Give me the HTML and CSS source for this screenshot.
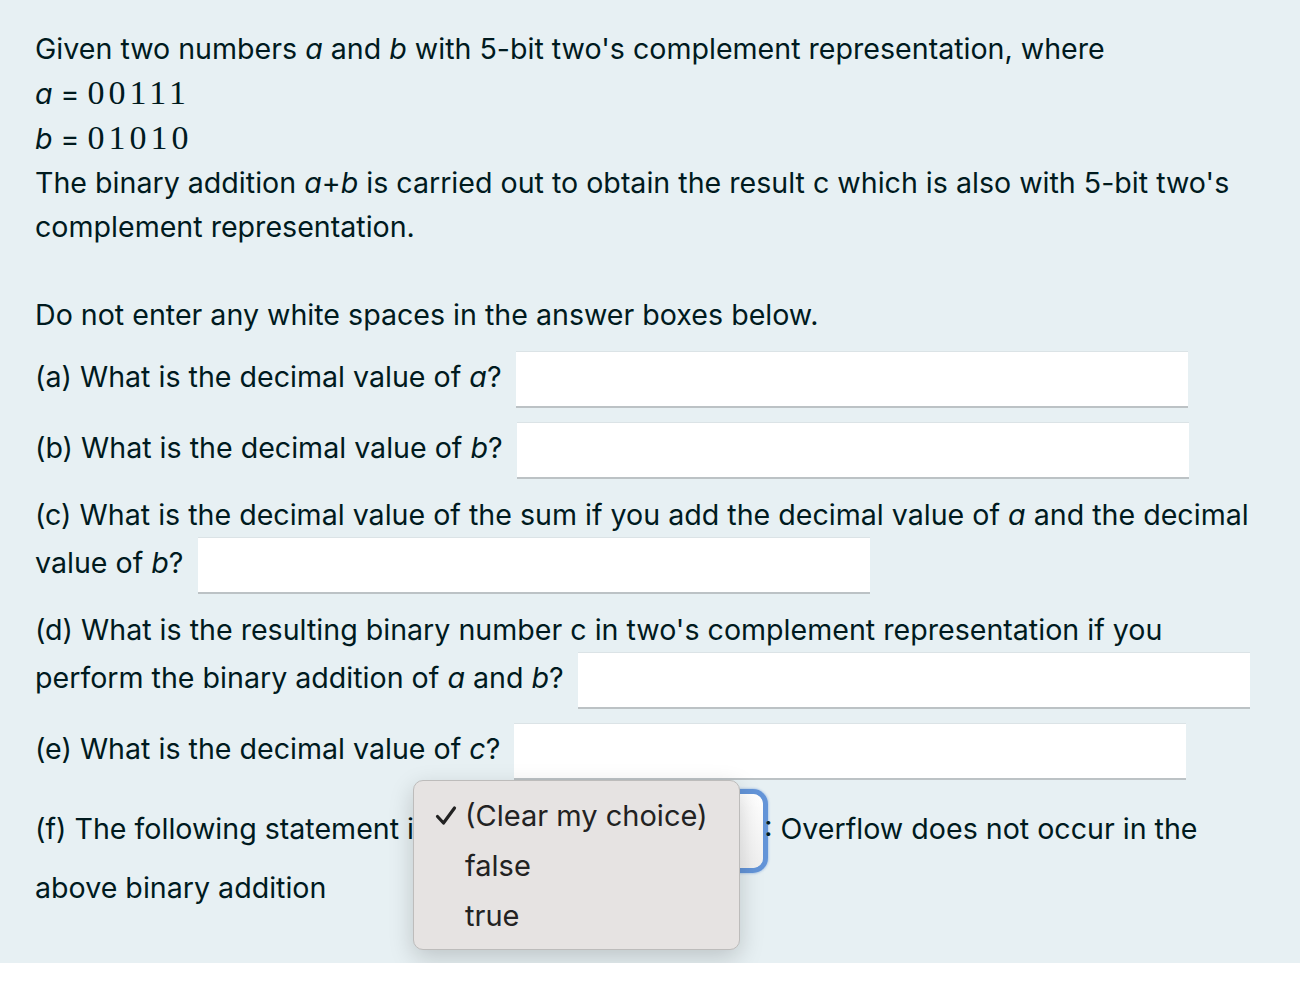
FILE: index.html
```html
<!DOCTYPE html>
<html>
<head>
<meta charset="utf-8">
<link rel="stylesheet" href="styles.css">
</head>
<body>
<div class="qtext">
  <p class="intro">Given two numbers <i>a</i> and <i>b</i> with 5-bit two's complement representation, where<br>
  <span class="math"><i>a</i> = <span class="mn">00111</span></span><br>
  <span class="math"><i>b</i> = <span class="mn">01010</span></span><br>
  The binary addition <i>a</i>+<i>b</i> is carried out to obtain the result c which is also with 5-bit two's complement representation.</p>
  <p class="blank">&nbsp;</p>
  <p class="line">Do not enter any white spaces in the answer boxes below.</p>
  <p class="q">(a) What is the decimal value of <i>a</i>? <span class="answer"></span></p>
  <p class="q">(b) What is the decimal value of <i>b</i>? <span class="answer"></span></p>
  <p class="q">(c) What is the decimal value of the sum if you add the decimal value of <i>a</i> and the decimal value of <i>b</i>? <span class="answer"></span></p>
  <p class="q">(d) What is the resulting binary number c in two's complement representation if you perform the binary addition of <i>a</i> and <i>b</i>? <span class="answer"></span></p>
  <p class="q">(e) What is the decimal value of <i>c</i>? <span class="answer"></span></p>
  <p class="q last">(f) The following statement is <span class="select"></span>: Overflow does not occur in the above binary addition</p>
  <div class="popup">
    <div class="opt"><svg class="check" width="22" height="22" viewBox="0 0 22 22"><path d="M2.5 11.5 L8.5 18 L19.5 3" fill="none" stroke="#222222" stroke-width="3.2" stroke-linecap="round" stroke-linejoin="round"/></svg>(Clear my choice)</div>
    <div class="opt">false</div>
    <div class="opt">true</div>
  </div>
</div>
</body>
</html>
```

FILE: styles.css
```css
html, body {
  margin: 0;
  padding: 0;
  background: #ffffff;
}
.qtext {
  position: relative;
  background: #e7f0f3;
  color: #001a1e;
  font-family: Inter, "Noto Sans", sans-serif;
  font-size: 28.6px;
  line-height: 44px;
  padding: 27px 32px 54px 35px;
  height: 882px;
}
.qtext p {
  margin: 0;
}
.qtext p.q {
  margin-top: 14px;
}
.qtext p.last {
  line-height: 40px;
}
.math i {
  font-style: italic;
}
.mn {
  font-family: "Liberation Serif", "Times New Roman", serif;
  font-size: 34px;
  letter-spacing: 4px;
}
.answer {
  display: inline-block;
  vertical-align: middle;
  width: 672px;
  height: 57px;
  box-sizing: border-box;
  background: #ffffff;
  border-top: 1px solid #dbe3e6;
  border-bottom: 2px solid #bcc2c5;
  margin-left: 6px;
}
.select {
  display: inline-block;
  vertical-align: middle;
  width: 326px;
  height: 74px;
  box-sizing: border-box;
  background: linear-gradient(#ffffff, #f0f0f0);
  border-radius: 10px;
  box-shadow: 0 0 0 5px #6394d8, 0 0 2px 6px rgba(99, 148, 216, 0.35);
  margin: 0 1px 0 0;
}
.popup {
  position: absolute;
  left: 413px;
  top: 780px;
  width: 327px;
  height: 170px;
  box-sizing: border-box;
  background: #e6e3e2;
  border: 1px solid #bdbcbb;
  border-radius: 10px;
  box-shadow: 0 8px 24px rgba(0, 0, 0, 0.18);
  padding-top: 10px;
  color: #222222;
  font-size: 29px;
}
.opt {
  height: 50px;
  line-height: 50px;
  padding-left: 51px;
  position: relative;
}
.check {
  position: absolute;
  left: 21px;
  top: 14px;
}
```
